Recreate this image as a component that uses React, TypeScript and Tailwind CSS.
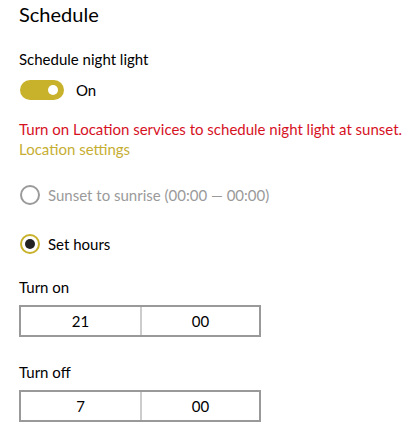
import React from "react";

const accent = "bg-[#c9b22b]";

function TimeBox({ hour, minute }: { hour: string; minute: string }) {
  return (
    <div className="w-[242px] h-[32px] border-2 border-[#999999] grid grid-cols-2 text-[15px] text-black">
      <div className="flex items-center justify-center">{hour}</div>
      <div className="flex items-center justify-center border-l-2 border-[#cccccc]">{minute}</div>
    </div>
  );
}

function Radio({ checked, disabled, label }: { checked?: boolean; disabled?: boolean; label: string }) {
  return (
    <div className="flex items-center h-[20px]">
      <span
        className={
          checked
            ? "w-[20px] h-[20px] rounded-full border-2 border-[#c9b22b] flex items-center justify-center"
            : "w-[20px] h-[20px] rounded-full border-2 border-[#9a9a9a]"
        }
      >
        {checked && <span className="w-[10px] h-[10px] rounded-full bg-[#222]" />}
      </span>
      <span className={`ml-[8px] text-[15px] leading-[20px] ${disabled ? "text-[#9a9a9a]" : "text-black"}`}>
        {label}
      </span>
    </div>
  );
}

export default function App() {
  return (
    <div className="w-[417px] h-[429px] bg-white pl-[19px] font-['Lato',sans-serif] text-black">
      <h1 className="text-[20px] leading-[28px]">Schedule</h1>

      <p className="mt-[21px] text-[15px] leading-[20px]">Schedule night light</p>

      <div className="mt-[11px] flex items-center h-[20px] pl-[1px]">
        <div className={`w-[44px] h-[20px] rounded-full ${accent} flex items-center justify-end pr-[6px]`}>
          <span className="w-[10px] h-[10px] rounded-full bg-white" />
        </div>
        <span className="ml-[12px] text-[15px] leading-[20px]">On</span>
      </div>

      <p className="mt-[19px] text-[15px] leading-[20px] text-[#d6121f]">
        Turn on Location services to schedule night light at sunset.
      </p>
      <p className="text-[15px] leading-[20px] text-[#c6ae33]">Location settings</p>

      <div className="mt-[26px] pl-[1px]">
        <Radio disabled label="Sunset to sunrise (00:00 — 00:00)" />
      </div>
      <div className="mt-[29px] pl-[1px]">
        <Radio checked label="Set hours" />
      </div>

      <p className="mt-[23px] text-[15px] leading-[20px]">Turn on</p>
      <div className="mt-[8px]">
        <TimeBox hour="21" minute="00" />
      </div>

      <p className="mt-[25px] text-[15px] leading-[20px]">Turn off</p>
      <div className="mt-[8px]">
        <TimeBox hour="7" minute="00" />
      </div>
    </div>
  );
}
